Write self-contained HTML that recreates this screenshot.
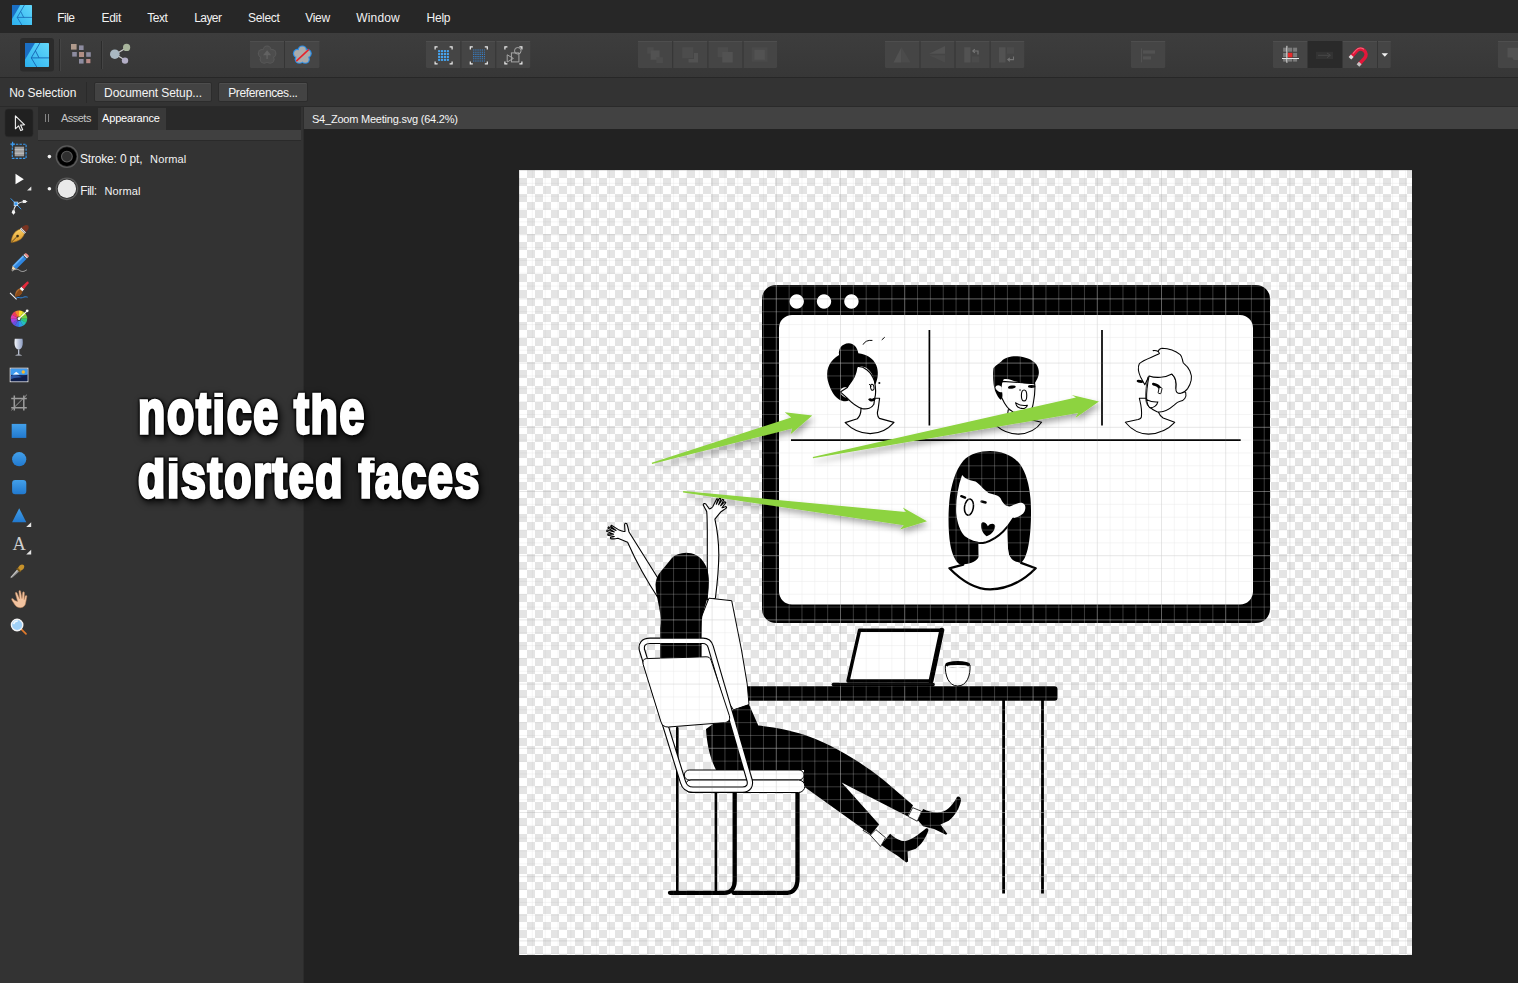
<!DOCTYPE html>
<html lang="en">
<head>
<meta charset="utf-8">
<title>S4_Zoom Meeting.svg</title>
<style>
*{box-sizing:border-box;margin:0;padding:0}
html,body{width:1518px;height:983px;overflow:hidden;background:#333333}
body{position:relative;font-family:"Liberation Sans",sans-serif;color:#f0f0f0;font-size:12px}
.abs{position:absolute}
.t{position:absolute;white-space:nowrap;line-height:1}
/* chrome bars */
#menubar{left:0;top:0;width:1518px;height:33px;background:#272727}
#toolbar{left:0;top:33px;width:1518px;height:45px;background:linear-gradient(#3d3d3d,#373737);border-bottom:1px solid #272727}
#ctxbar{left:0;top:78px;width:1518px;height:29px;background:#333333}
#ptabs{left:38px;top:106.5px;width:263px;height:23.5px;background:#292929}
#pstrip{left:38px;top:130px;width:263px;height:11px;background:#404040;border-bottom:1px solid #2a2a2a}
#doctab{left:304px;top:107px;width:1214px;height:22px;background:#424242}
#work{left:304px;top:129px;width:1214px;height:854px;background:#222222}
#gutter{left:303px;top:107px;width:1px;height:876px;background:#2c2c2c}
.menu{top:11px;font-size:13px;color:#f2f2f2}
.tbtn{position:absolute;top:41px;height:27px;background:#454545;border-top:1px solid #505050}
.sep{position:absolute;width:1px;background:#2a2a2a}
.cbtn{position:absolute;top:81.7px;height:20.6px;background:#434343;border:1px solid #2c2c2c;border-radius:2px;box-shadow:inset 0 1px 0 #4d4d4d}
/* canvas */
#canvas{left:519px;top:170px;width:893px;height:785px;background-color:#ffffff;
 background-image:conic-gradient(#e4e4e4 25%,#ffffff 0 50%,#e4e4e4 0 75%,#ffffff 0);
 background-size:16px 16px;background-position:0 0}
#art{left:519px;top:170px;width:893px;height:785px}
/* caption */
.capw{position:absolute;left:137.8px;filter:drop-shadow(0 0 .8px #000) drop-shadow(0 0 .8px #000) drop-shadow(2px 3px 3px rgba(0,0,0,.75))}
.cap{font-weight:bold;font-size:61px;color:#fff;white-space:nowrap;line-height:1;transform-origin:0 0;-webkit-text-stroke:3.4px #fff;letter-spacing:2.4px;clip-path:inset(11.1px -30px -30px -30px)}
</style>
</head>
<body>
<!-- ======= bars ======= -->
<div class="abs" id="menubar"></div>
<div class="abs" id="toolbar"></div>
<div class="abs" id="ctxbar"></div>
<div class="abs" id="ptabs"></div>
<div class="abs" id="pstrip"></div>
<div class="abs" id="doctab"></div>
<div class="abs" id="work"></div>
<div class="abs" id="gutter"></div>
<div class="abs" style="left:0;top:106px;width:1518px;height:1px;background:#2a2a2a"></div>


<!-- TOOLBAR-BEGIN -->
<svg class="abs" style="left:0;top:0;width:1518px;height:108px" viewBox="0 0 1518 108">
<defs>
 <linearGradient id="lgA" x1="1" y1="0" x2="0" y2="1"><stop offset="0" stop-color="#63d8fb"/><stop offset="1" stop-color="#2bb0ee"/></linearGradient>
 <g id="afflogo">
  <rect x="0" y="0" width="20" height="20" rx=".6" fill="url(#lgA)"/>
  <path d="M0 0H8.300L0 14Z" fill="#1b6fc4"/>
  <path d="M12.400 0L5.200 12.400L9.800 20M5.200 12.400H20M8.700 6.500L11.700 12.400" stroke="#1462b2" stroke-width=".75" fill="none"/>
 </g>
 <g id="flower"><path d="M0 -9.200C2.600 -9.200 4.600 -7.200 4.600 -4.800C7.200 -5.600 9.600 -3.800 9.600 -1.200C9.600 1 8 2.600 6.200 3C7.400 5.400 6 8.400 3 8.600C1.800 8.600 .6 8 0 7C-.6 8 -1.800 8.600 -3 8.600C-6 8.400 -7.400 5.400 -6.200 3C-8 2.600 -9.600 1 -9.600 -1.200C-9.600 -3.800 -7.200 -5.600 -4.600 -4.800C-4.600 -7.200 -2.600 -9.200 0 -9.200Z"/></g>
 <g id="brk" fill="none" stroke="#ededed" stroke-width="1.200"><path d="M-8.500 -6V-8.500H-6M6 -8.500H8.500V-6M8.500 6V8.500H6M-6 8.500H-8.500V6"/></g>
</defs>
<!-- app logo in menu bar -->
<use href="#afflogo" transform="translate(12 5)"/>
<!-- persona buttons -->
<rect x="20" y="38" width="34" height="33.500" rx="3" fill="#2b2b2b"/>
<use href="#afflogo" transform="translate(25 43) scale(1.2)"/>
<rect x="59" y="39" width="1" height="32" fill="#2b2b2b"/><rect x="60" y="39" width="1" height="32" fill="#444"/>
<g>
 <rect x="71" y="44" width="5.600" height="5.600" fill="#b09a8c"/><rect x="79" y="45.400" width="4.600" height="4.600" fill="#8d8ca0"/>
 <rect x="72.200" y="52" width="4.600" height="4.600" fill="#8d8ca0"/><rect x="79" y="52" width="5" height="5" fill="#b08e84"/><rect x="86.200" y="52.200" width="4.600" height="4.600" fill="#8d8ca0"/>
 <rect x="79" y="59" width="4.600" height="4.600" fill="#8d8ca0"/><rect x="86.200" y="59" width="4.200" height="4.200" fill="#b88a86"/>
</g>
<rect x="101" y="41" width="1" height="28" fill="#2b2b2b"/><rect x="102" y="41" width="1" height="28" fill="#444"/>
<g>
 <path d="M115.500 54.200L126 48M115.500 54.200L124.800 60" stroke="#c9c9c9" stroke-width="1.300"/>
 <circle cx="114.800" cy="54.200" r="4.800" fill="#a9b8c2"/><circle cx="126.600" cy="47.400" r="3.600" fill="#a8b59c"/><circle cx="125" cy="60.600" r="3.200" fill="#b3aec6"/>
</g>

<!-- button group backgrounds -->
<g fill="#454545">
 <rect x="250" y="41" width="69.400" height="27" rx="1.500"/>
 <rect x="426" y="41" width="104.200" height="27" rx="1.500"/>
 <rect x="638" y="41" width="139" height="27" rx="1.500"/>
 <rect x="885" y="41" width="139.200" height="27" rx="1.500"/>
 <rect x="1131" y="41" width="34.200" height="27" rx="1.500"/>
 <rect x="1273" y="41" width="117.800" height="27" rx="1.500"/>
 <rect x="1498" y="41" width="24" height="27" rx="1.500"/>
</g>
<g fill="#4e4e4e">
 <rect x="250" y="41" width="69.400" height="1"/><rect x="426" y="41" width="104.200" height="1"/><rect x="638" y="41" width="139" height="1"/>
 <rect x="885" y="41" width="139.200" height="1"/><rect x="1131" y="41" width="34.200" height="1"/><rect x="1273" y="41" width="117.800" height="1"/><rect x="1498" y="41" width="24" height="1"/>
</g>
<rect x="1307.500" y="41" width="35" height="27" fill="#2a2a2a"/>
<!-- separators -->
<g fill="#353535">
 <rect x="284" y="41" width="1" height="27"/>
 <rect x="460.400" y="41" width="1" height="27"/><rect x="495.300" y="41" width="1" height="27"/>
 <rect x="672.200" y="41" width="1" height="27"/><rect x="707.400" y="41" width="1" height="27"/><rect x="742.500" y="41" width="1" height="27"/>
 <rect x="919.500" y="41" width="1" height="27"/><rect x="954.500" y="41" width="1" height="27"/><rect x="989.600" y="41" width="1" height="27"/>
 <rect x="1377" y="41" width="1" height="27"/>
</g>
<!-- group 1 : flowers -->
<g transform="translate(267.100 54.800)"><g fill="#585858"><circle cx="0.00" cy="-4.70" r="4.50"/><circle cx="4.76" cy="-1.25" r="4.50"/><circle cx="2.94" cy="4.35" r="4.50"/><circle cx="-2.94" cy="4.35" r="4.50"/><circle cx="-4.76" cy="-1.25" r="4.50"/><circle cx="0" cy=".3" r="5.70"/></g><g fill="#4d4d4d"><circle cx="0.00" cy="-4.70" r="3.50"/><circle cx="4.76" cy="-1.25" r="3.50"/><circle cx="2.94" cy="4.35" r="3.50"/><circle cx="-2.94" cy="4.35" r="3.50"/><circle cx="-4.76" cy="-1.25" r="3.50"/><circle cx="0" cy=".3" r="4.70"/></g><path d="M0 4.200V-1.800M-2.700 -.2L0 -3.600L2.700 -.2Z" stroke="#626262" stroke-width="1.300" fill="#626262"/></g>
<g transform="translate(302.300 54.800)"><g fill="#2a8de6"><circle cx="0.00" cy="-4.70" r="4.70"/><circle cx="4.76" cy="-1.25" r="4.70"/><circle cx="2.94" cy="4.35" r="4.70"/><circle cx="-2.94" cy="4.35" r="4.70"/><circle cx="-4.76" cy="-1.25" r="4.70"/><circle cx="0" cy=".3" r="5.90"/></g><g fill="#ababab"><circle cx="0.00" cy="-4.70" r="3.50"/><circle cx="4.76" cy="-1.25" r="3.50"/><circle cx="2.94" cy="4.35" r="3.50"/><circle cx="-2.94" cy="4.35" r="3.50"/><circle cx="-4.76" cy="-1.25" r="3.50"/><circle cx="0" cy=".3" r="4.70"/></g><path d="M-6 6.300L6.600 -5.400" stroke="#e8212a" stroke-width="1.500"/></g>
<!-- group 2 : snapping grids -->
<g transform="translate(443.600 55.400)"><use href="#brk"/>
 <g fill="#46a3ee"><rect x="-5.500" y="-5.300" width="2.100" height="2.100"/><rect x="-2.600" y="-5.300" width="2.100" height="2.100"/><rect x=".3" y="-5.300" width="2.100" height="2.100"/><rect x="3.200" y="-5.300" width="2.100" height="2.100"/>
 <rect x="-5.500" y="-2.400" width="2.100" height="2.100"/><rect x="-2.600" y="-2.400" width="2.100" height="2.100"/><rect x=".3" y="-2.400" width="2.100" height="2.100"/><rect x="3.200" y="-2.400" width="2.100" height="2.100"/>
 <rect x="-5.500" y=".5" width="2.100" height="2.100"/><rect x="-2.600" y=".5" width="2.100" height="2.100"/><rect x=".3" y=".5" width="2.100" height="2.100"/><rect x="3.200" y=".5" width="2.100" height="2.100"/>
 <rect x="-5.500" y="3.400" width="2.100" height="2.100"/><rect x="-2.600" y="3.400" width="2.100" height="2.100"/><rect x=".3" y="3.400" width="2.100" height="2.100"/><rect x="3.200" y="3.400" width="2.100" height="2.100"/></g></g>
<g transform="translate(478.800 55.400)"><use href="#brk"/>
 <path d="M-5.600 -5.400H6M-5.600 -3.200H6M-5.600 -1H6M-5.600 1.200H6M-5.600 3.400H6M-5.600 5.600H6" stroke="#3588dc" stroke-width="1.100" stroke-dasharray="1.100 1.050"/></g>
<g transform="translate(513.400 55.400)"><use href="#brk"/>
 <g fill="none" stroke="#a5a5a5" stroke-width="1"><rect x="-2" y="-2.500" width="7.500" height="9"/><circle cx="4.400" cy="-4.600" r="3.300"/><path d="M-6.200 -.600L0 3L-6.200 6.600Z"/></g></g>
<!-- group 3 : arrange (disabled) -->
<g fill="#525252">
 <rect x="647.200" y="47.200" width="6.500" height="6.500" fill="#4c4c4c"/><rect x="650.600" y="50.400" width="9" height="9.400"/><rect x="656.400" y="57.200" width="6.500" height="5.800" fill="#4c4c4c"/>
 <rect x="682.200" y="47.200" width="11" height="11" fill="#4c4c4c"/><path d="M694 53H698V62.500H688.500V59H694Z"/>
 <rect x="717.700" y="47.200" width="10.300" height="10" fill="#4c4c4c"/><rect x="722.200" y="52" width="10.600" height="10.500"/>
 <rect x="751.800" y="47.200" width="15.800" height="14.500" fill="#4a4a4a"/><rect x="754.400" y="49.800" width="10.500" height="10"/>
</g>
<!-- group 4 : transforms (disabled) -->
<g fill="#525252">
 <path d="M893.500 62.500L901.400 47.200V62.500Z"/><path d="M901.400 47.200L910.600 62.500H901.400Z" fill="#4b4b4b"/>
 <path d="M929 53.800L945 45.900V53.800Z"/><path d="M929 55.200H945V62.500Z" fill="#4b4b4b"/>
 <rect x="964.200" y="47.200" width="6.300" height="15.300"/><rect x="972" y="56.400" width="7.200" height="6.100" fill="#4b4b4b"/>
 <rect x="999" y="47.200" width="6.500" height="15.300"/><rect x="1006.900" y="47.200" width="7.100" height="6.600" fill="#4b4b4b"/>
</g>
<g fill="none" stroke="#757575" stroke-width="1.100"><path d="M978 54.500V51H973M974.800 49.200L972.800 51L974.800 52.800"/><path d="M1013.500 56.500V59.600H1008M1009.800 57.800L1007.800 59.600L1009.800 61.400"/></g>
<!-- align button -->
<g fill="#525252"><rect x="1141" y="48.400" width="1" height="14"/><rect x="1143" y="50.300" width="12" height="3.400"/><rect x="1143" y="56.300" width="8" height="3.200"/></g>
<!-- snapping group -->
<g fill="#7b7b7b">
 <rect x="1283.100" y="47.700" width="4" height="4"/><rect x="1288" y="47.700" width="4.200" height="4"/><rect x="1293.100" y="47.700" width="4" height="4"/>
 <rect x="1283.100" y="52.900" width="4" height="4.200"/><rect x="1293.100" y="52.900" width="4" height="4.200"/>
 <rect x="1283.100" y="58" width="4" height="3.600"/><rect x="1288" y="58" width="4.200" height="3.600"/><rect x="1293.100" y="58" width="4" height="3.600"/>
</g>
<rect x="1287.800" y="52.800" width="4.600" height="4.500" fill="#ea2b2b"/>
<rect x="1286.400" y="45.800" width="1" height="17" fill="#e6e6e6"/><rect x="1282" y="58" width="17" height="1" fill="#e6e6e6"/>
<rect x="1316" y="51.800" width="17" height="7.200" fill="#333"/><path d="M1318 55.300H1330M1327 53L1330.500 55.300L1327 57.600" stroke="#484848" stroke-width="1" fill="none"/>
<g transform="translate(1359.600 55.600) rotate(42)">
 <path d="M-7.200 7.500V-1.500A7.200 7.200 0 0 1 7.200 -1.500V7.500H3.600V-1.500A3.600 3.600 0 0 0 -3.600 -1.500V7.500Z" fill="#e3163a"/>
 <path d="M-6.300 3V-1.500A6.300 6.300 0 0 1 -1 -7.600" stroke="#ff7f90" stroke-width="1" fill="none" opacity=".75"/>
 <rect x="-7.200" y="5" width="3.600" height="3.400" fill="#dcdcdc"/><rect x="3.600" y="5" width="3.600" height="3.400" fill="#c4c4c4"/>
</g>
<path d="M1381.600 53.200H1388L1384.800 56.800Z" fill="#f2f2f2"/>
<!-- last clipped button -->
<path d="M1507.500 47.800H1518V60H1514.500C1513.200 60 1512.600 59 1512.600 57.500H1507.500Z" fill="#525252"/>
</svg>
<!-- TOOLBAR-END -->

<!-- ======= context bar ======= -->
<div class="sep" style="left:86px;top:82px;height:21px"></div>
<div class="cbtn" style="left:93.7px;width:118.5px"></div>
<div class="cbtn" style="left:217.6px;width:90.6px"></div>

<!-- ======= panel ======= -->
<div class="abs" style="left:97.6px;top:108px;width:68px;height:22px;background:#393939"></div>
<!-- SWATCH-BEGIN -->
<svg class="abs" style="left:40px;top:142px;width:44px;height:64px" viewBox="40 142 44 64">
 <circle cx="49.400" cy="156.600" r="1.800" fill="#f4f4f4"/><circle cx="49.400" cy="188.800" r="1.800" fill="#f4f4f4"/>
 <circle cx="66.900" cy="156.600" r="10.700" fill="#2c2c2c" stroke="#5a5a5a" stroke-width="1.300"/><circle cx="66.900" cy="156.600" r="9.400" fill="#000"/>
 <circle cx="66.900" cy="156.600" r="5.400" fill="#2f2f2f" stroke="#5c5c5c" stroke-width="1.100"/>
 <circle cx="66.900" cy="188.800" r="10.700" fill="#2c2c2c" stroke="#5a5a5a" stroke-width="1.300"/><circle cx="66.900" cy="188.800" r="9.200" fill="#e9e9e9"/>
</svg>
<!-- SWATCH-END -->

<!-- TEXT-BEGIN -->
<div class="t" style="left:57.2px;top:11.5px;font-size:12px;color:#f2f2f2;letter-spacing:-0.51px">File</div>
<div class="t" style="left:101.4px;top:11.5px;font-size:12px;color:#f2f2f2;letter-spacing:-0.26px">Edit</div>
<div class="t" style="left:147.3px;top:11.5px;font-size:12px;color:#f2f2f2;letter-spacing:-0.47px">Text</div>
<div class="t" style="left:194.2px;top:11.5px;font-size:12px;color:#f2f2f2;letter-spacing:-0.56px">Layer</div>
<div class="t" style="left:248.0px;top:11.5px;font-size:12px;color:#f2f2f2;letter-spacing:-0.29px">Select</div>
<div class="t" style="left:305.2px;top:11.5px;font-size:12px;color:#f2f2f2;letter-spacing:-0.27px">View</div>
<div class="t" style="left:356.3px;top:11.5px;font-size:12px;color:#f2f2f2;letter-spacing:0.16px">Window</div>
<div class="t" style="left:426.5px;top:11.5px;font-size:12px;color:#f2f2f2;letter-spacing:-0.23px">Help</div>
<div class="t" style="left:9.2px;top:86.6px;font-size:12px;color:#f4f4f4;letter-spacing:-0.08px">No Selection</div>
<div class="t" style="left:104.1px;top:86.6px;font-size:12px;color:#f4f4f4;letter-spacing:-0.09px">Document Setup...</div>
<div class="t" style="left:228.2px;top:86.6px;font-size:12px;color:#f4f4f4;letter-spacing:-0.38px">Preferences...</div>
<div class="t" style="left:61.0px;top:113.0px;font-size:11px;color:#c4c4c4;letter-spacing:-0.52px">Assets</div>
<div class="t" style="left:102.0px;top:113.0px;font-size:11px;color:#ffffff;letter-spacing:-0.15px">Appearance</div>
<div class="t" style="left:80.0px;top:153.0px;font-size:12px;color:#f2f2f2;letter-spacing:-0.18px">Stroke: 0 pt,</div>
<div class="t" style="left:150.1px;top:153.9px;font-size:11px;color:#f2f2f2;letter-spacing:0.11px">Normal</div>
<div class="t" style="left:80.3px;top:184.9px;font-size:12px;color:#f2f2f2;letter-spacing:-0.49px">Fill:</div>
<div class="t" style="left:104.4px;top:185.8px;font-size:11px;color:#f2f2f2;letter-spacing:0.11px">Normal</div>
<div class="t" style="left:312.0px;top:113.8px;font-size:11px;color:#f6f6f6;letter-spacing:-0.22px">S4_Zoom Meeting.svg (64.2%)</div>
<div class="abs" style="left:45px;top:114.2px;width:1px;height:7.6px;background:#858585"></div><div class="abs" style="left:48px;top:114.2px;width:1px;height:7.6px;background:#858585"></div>
<!-- TEXT-END -->

<!-- TOOLS-BEGIN -->
<svg class="abs" style="left:0;top:107px;width:38px;height:540px" viewBox="0 107 38 540">
<defs>
 <linearGradient id="tb" x1="0" y1="0" x2="0" y2="1"><stop offset="0" stop-color="#43a0ea"/><stop offset="1" stop-color="#2179cf"/></linearGradient>
 <linearGradient id="gl" x1="0" y1="0" x2="1" y2="0"><stop offset="0" stop-color="#f4f6fb"/><stop offset="1" stop-color="#8b9bc0"/></linearGradient>
 <linearGradient id="nib" x1="0" y1="0" x2="1" y2="1"><stop offset="0" stop-color="#ffd66b"/><stop offset="1" stop-color="#d28a1f"/></linearGradient>
</defs>
<!-- selected tool bg -->
<rect x="5" y="109" width="28" height="27.800" rx="3" fill="#202020" stroke="#2c2c2c" stroke-width=".6"/>
<!-- move tool -->
<path d="M15.400 115.800V128.800L18.600 125.900L20.700 130.600L22.700 129.700L20.600 125.100L24.600 124.800Z" fill="#2a2a2a" stroke="#f2f2f2" stroke-width="1.100" stroke-linejoin="round"/>
<!-- artboard tool -->
<rect x="12.300" y="144.200" width="13.800" height="14.200" fill="none" stroke="#3a9af0" stroke-width="1.100" stroke-dasharray="2.400 1.200"/>
<path d="M10.400 144.200H14.800M12.600 141.800V146.400" stroke="#3a9af0" stroke-width="1.200"/>
<rect x="14.700" y="146.700" width="9.400" height="9.600" fill="#9b9b9b"/><path d="M14.700 149.700H24.100M14.700 153.200H24.100" stroke="#c9c9c9" stroke-width=".9"/>
<!-- node tool -->
<path d="M15.500 173.800V184.300L23.800 179.300Z" fill="#fbfbfb"/>
<path d="M31.300 186.400V190.600H27Z" fill="#e4e4e4"/>
<!-- corner tool -->
<path d="M10.700 198.400L21.200 209.200" stroke="#3a9af0" stroke-width="1"/>
<path d="M13.500 213.500C13.500 206 17.500 201.800 26 201.500" fill="none" stroke="#e8e8e8" stroke-width="1.100"/>
<path d="M22.800 199.800L27.800 201.500L22.800 203.200ZM11.900 210.400L13.500 215.200L15.100 210.400Z" fill="#f4f4f4"/>
<circle cx="13.500" cy="212.300" r="1.600" fill="#f4f4f4"/><circle cx="24.900" cy="201.500" r="1.500" fill="#f4f4f4"/>
<rect x="14.100" y="202" width="3.700" height="3.700" fill="#3a9af0" stroke="#d6ecff" stroke-width=".6"/>
<!-- pen tool -->
<g transform="translate(19 234.600) rotate(45)">
 <path d="M0 11.200C-5.400 5 -5.200 -1.500 -3 -4.500H3C5.200 -1.500 5.400 5 0 11.200Z" fill="url(#nib)" stroke="#a8701a" stroke-width=".5"/>
 <path d="M0 10.500V3" stroke="#4a3a1a" stroke-width=".8"/><circle cx="0" cy="2" r="1.300" fill="#3a2d14"/>
 <rect x="-3.300" y="-6.700" width="6.600" height="2.300" fill="#e9e9e9"/><path d="M-3.300 -5.500H3.300" stroke="#555" stroke-width=".6"/>
 <path d="M-3 -6.700C-3.400 -10.500 -2 -12.500 0 -13C2 -12.500 3.400 -10.500 3 -6.700Z" fill="#7a3422"/>
</g>
<!-- pencil tool -->
<g transform="translate(19 263) rotate(45)">
 <rect x="-2.500" y="-8" width="5" height="14.500" fill="#2f86e0"/><rect x="-2.500" y="-8" width="1.700" height="14.500" fill="#66b1f5"/>
 <rect x="-2.500" y="-10.200" width="5" height="1.500" fill="#e6e6e6"/><path d="M-2.500 -10.200V-11.200C-2.500 -12.600 2.500 -12.600 2.500 -11.200V-10.200Z" fill="#f08a84"/>
 <path d="M-2.500 6.500H2.500L0 10.800Z" fill="#f0d9b0"/><path d="M-.9 9.200H.9L0 10.800Z" fill="#333"/>
</g>
<path d="M12 271.200C15 268.600 17.600 268.800 19.600 270.400C22 272.200 24.200 271.600 26.800 269.800" fill="none" stroke="#a9a9a9" stroke-width="1"/>
<!-- brush tool -->
<path d="M10 292.800L16.600 299.400" stroke="#f1f1f1" stroke-width="1.100"/>
<path d="M16.200 298.200C18.400 296.200 20.200 298.800 22.600 297.600C24.400 296.600 25.800 296.600 27.600 297.200" fill="none" stroke="#2f86e0" stroke-width="1"/>
<g transform="translate(20.400 290.600) rotate(42)">
 <path d="M0 7.800C-3.600 4.500 -3 1 -1.900 -1H1.900C3 1 3.600 4.500 0 7.800Z" fill="#b06a2c"/><path d="M0 7.800C-1.800 4.500 -1.600 1 -1 -1H1.900C3 1 3.600 4.500 0 7.800Z" fill="#8a4a18"/>
 <rect x="-1.800" y="-3.600" width="3.600" height="2.700" fill="#f2f2f2"/>
 <path d="M-1.700 -3.600L-1.100 -11C-.6 -12 .6 -12 1.100 -11L1.700 -3.600Z" fill="#e42a3c"/>
</g>
<!-- fill (colour wheel) tool -->
<g transform="translate(19 318.700)">
 <path d="M0 0L-0.11 -8.20A8.2 8.2 0 0 1 4.20 -7.04Z" fill="#f6e12a"/><path d="M0 0L4.00 -7.16A8.2 8.2 0 0 1 7.16 -4.00Z" fill="#c3dc2e"/><path d="M0 0L7.04 -4.20A8.2 8.2 0 0 1 8.20 0.11Z" fill="#6fd044"/><path d="M0 0L8.20 -0.11A8.2 8.2 0 0 1 7.04 4.20Z" fill="#2fc77a"/><path d="M0 0L7.16 4.00A8.2 8.2 0 0 1 4.00 7.16Z" fill="#25bfc0"/><path d="M0 0L4.20 7.04A8.2 8.2 0 0 1 -0.11 8.20Z" fill="#2f9be8"/><path d="M0 0L0.11 8.20A8.2 8.2 0 0 1 -4.20 7.04Z" fill="#3f6fe6"/><path d="M0 0L-4.00 7.16A8.2 8.2 0 0 1 -7.16 4.00Z" fill="#6a4fe0"/><path d="M0 0L-7.04 4.20A8.2 8.2 0 0 1 -8.20 -0.11Z" fill="#a545dd"/><path d="M0 0L-8.20 0.11A8.2 8.2 0 0 1 -7.04 -4.20Z" fill="#dd3fb0"/><path d="M0 0L-7.16 -4.00A8.2 8.2 0 0 1 -4.00 -7.16Z" fill="#ee3b5c"/><path d="M0 0L-4.20 -7.04A8.2 8.2 0 0 1 0.11 -8.20Z" fill="#f5872c"/>
 <circle r="2.300" fill="#3a3a3a"/>
 <path d="M0 0L8.200 -7.900" stroke="#fafafa" stroke-width="1.100"/><circle r="1.400" fill="#fafafa"/><circle cx="8.200" cy="-7.900" r="1.400" fill="#fafafa"/>
</g>
<!-- transparency (glass) tool -->
<path d="M14.800 338.800H22.500C23.400 344 22.400 349.400 18.700 349.600C14.800 349.400 13.900 344 14.800 338.800Z" fill="url(#gl)"/>
<rect x="18.100" y="349.400" width="1.200" height="5.200" fill="#c4cde2"/><path d="M15.200 355.400C16.600 354.200 20.700 354.200 22.100 355.400Z" fill="#d3d9ea"/>
<!-- place image tool -->
<rect x="10.200" y="368.200" width="17.700" height="13.500" fill="#182a5e" stroke="#e4e4e4" stroke-width="1"/>
<rect x="10.700" y="368.700" width="16.700" height="6.200" fill="#3f9cf0"/>
<path d="M10.700 379.500C15 376 20 379 27.400 374.500V381.200H10.700Z" fill="#0f1f4c"/><path d="M10.700 376.200C14 373.500 18.500 375.500 21.800 377.300C17.800 378 14.600 377.500 10.700 379.200Z" fill="#2b57a6"/>
<path d="M13 374.600L16.200 371.700L19.600 374.600Z" fill="#f4f8ff"/><circle cx="23.300" cy="372" r="1.700" fill="#f5b92e"/>
<!-- vector crop tool -->
<path d="M14.300 395.400V410.600M23.800 395.400V410.600M11.200 398.500H26.800M11.200 407.700H26.800" stroke="#9c9c9c" stroke-width="1.500"/><path d="M11.400 410.200L26.800 394.800" stroke="#9c9c9c" stroke-width="1"/>
<!-- shapes -->
<rect x="11.700" y="423.900" width="14.600" height="14" fill="url(#tb)"/>
<circle cx="19.200" cy="459.200" r="7.100" fill="url(#tb)"/>
<rect x="12.100" y="480" width="14.200" height="14.200" rx="3.200" fill="url(#tb)"/>
<path d="M19.200 508.300L26.300 522.300H12.100Z" fill="url(#tb)"/><path d="M31.200 522.200V527H26.200Z" fill="#e4e4e4"/>
<!-- text tool : drawn as real text -->
<text x="19.200" y="550.200" font-family="'Liberation Serif',serif" font-size="18.500" fill="#cfcfcf" text-anchor="middle">A</text>
<path d="M31.200 549.800V554.600H26.200Z" fill="#e4e4e4"/>
<!-- colour picker -->
<g transform="translate(17.200 571.600) rotate(45)">
 <path d="M-1.400 -1.500H1.400L.8 7.500L0 9.500L-.8 7.500Z" fill="#8f8f8f"/><path d="M-1.400 -1.500H0L0 9.500L-.8 7.500Z" fill="#c4c4c4"/>
 <rect x="-2.600" y="-3" width="5.200" height="1.800" fill="#7a5a1c"/>
 <path d="M-2 -3C-3.200 -6.600 -2 -9 0 -9.200C2 -9 3.200 -6.600 2 -3Z" fill="#c7922b"/>
</g>
<!-- view (hand) tool -->
<g fill="#f2c3a0" stroke="#b57c55" stroke-width=".5" stroke-linejoin="round">
 <path d="M14.800 600.400C13.200 598.800 12.200 598.200 11.700 598.800C11.200 599.800 13.400 602.400 15 605C16.400 607 18.600 607.900 20.800 607.700C23.600 607.400 25.200 605.600 25.600 603.200L26.900 596.400C27 595.200 25.600 595 25.200 596.100L24.200 599.600L24.400 592.800C24.400 591.500 22.800 591.500 22.600 592.800L22 598.600L20.600 591.200C20.300 590 18.800 590.300 18.900 591.600L19.600 598.800L17 592.900C16.400 591.800 15 592.400 15.400 593.600L17.600 601.500Z"/>
</g>
<!-- zoom tool -->
<path d="M21.300 629.200L26 633.800" stroke="#e07a2c" stroke-width="1.700" stroke-linecap="round"/>
<circle cx="17.100" cy="625" r="5.700" fill="#9fd0f7" stroke="#f4f4f4" stroke-width="1.400"/><path d="M13.600 624.200C14 622 15.800 620.900 17.800 621" stroke="#eef8ff" stroke-width="1.500" fill="none"/>
</svg>
<!-- TOOLS-END -->

<!-- ======= canvas ======= -->
<div class="abs" id="canvas"></div>
<svg class="abs" id="art" viewBox="519 170 893 785">
<defs>
 <pattern id="gmin" x="519" y="170" width="12.84" height="12.84" patternUnits="userSpaceOnUse">
  <path d="M0 0H12.84M0 0V12.84" stroke="#808080" stroke-opacity=".16" stroke-width="1" fill="none"/>
 </pattern>
 <pattern id="gmaj" x="519" y="170" width="64.2" height="64.2" patternUnits="userSpaceOnUse">
  <path d="M0 0H64.2M0 0V64.2" stroke="#707070" stroke-opacity=".22" stroke-width="1" fill="none"/>
 </pattern>
 <pattern id="lmin" x="519" y="170" width="12.84" height="12.84" patternUnits="userSpaceOnUse">
  <path d="M0 0H12.84M0 0V12.84" stroke="#ffffff" stroke-opacity=".42" stroke-width=".9" fill="none"/>
 </pattern>
 <pattern id="lmaj" x="519" y="170" width="64.2" height="64.2" patternUnits="userSpaceOnUse">
  <path d="M0 0H64.2M0 0V64.2" stroke="#ffffff" stroke-opacity=".3" stroke-width="1" fill="none"/>
 </pattern>
 <!-- monitor frame shape -->
 <path id="mon" fill-rule="evenodd" d="M776 285H1256a14 14 0 0 1 14 14V609a14 14 0 0 1 -14 14H776a14 14 0 0 1 -14 -14V299a14 14 0 0 1 14 -14Z
  M792 315a13 13 0 0 0 -13 13V591.5a13 13 0 0 0 13 13H1240a13 13 0 0 0 13 -13V328a13 13 0 0 0 -13 -13Z
  M796.7 294.3a7.2 7.2 0 1 0 .01 0Z M824 294.3a7.2 7.2 0 1 0 .01 0Z M851.4 294.3a7.2 7.2 0 1 0 .01 0Z"/>
</defs>
<!-- ART-BEGIN -->
<!-- monitor -->
<rect x="779" y="315" width="474" height="290" rx="13" fill="#fff"/>
<circle cx="796.7" cy="301.5" r="7.2" fill="#fff"/><circle cx="824" cy="301.5" r="7.2" fill="#fff"/><circle cx="851.4" cy="301.5" r="7.2" fill="#fff"/>
<use href="#mon" fill="#000"/>
<path d="M929.4 330V425.5M1102 330V425.5M791 440.2H1240.7" stroke="#000" stroke-width="1.7" fill="none"/>

<!-- face 1 : woman with bun -->
<g transform="translate(800 325) scale(.12207)" stroke="#000" stroke-width="9.500" fill="none" stroke-linecap="round" stroke-linejoin="round">
 <path fill="#fff" d="M500 683C500 720 495 745 470 768L370 800C420 850 490 890 575 890C660 890 725 850 770 798L650 765C632 745 628 725 640 690L652 600L600 600Z"/>
 <path fill="#fff" d="M470 340C520 335 585 380 610 460C622 520 622 570 612 600L605 650C590 680 550 692 510 685C460 670 420 635 385 597L330 548L388 512Z"/>
 </g>
<g fill="#000" stroke="none"><path id="hair1" d="M839.06 354.91C838.09 349.41 841.5 343.55 848.83 343.31C853.71 343.31 857.37 347.58 858.35 353.32C865.92 354.05 873.24 357.96 876.29 365.28C878.74 371.39 878.12 378.71 875.44 384.2L874.71 383.59C874.22 377.49 871.41 371.39 866.53 367.97C863.48 366.26 859.81 365.89 857.37 366.5C857.13 373.83 853.71 380.54 847.36 387.5C843.95 386.65 839.67 388.48 840.28 391.89C840.89 395.19 843.95 397.02 847 397.88L848.83 400.44C846.39 401.9 842.11 401.29 839.06 399.46C832.96 395.8 828.69 386.03 827.1 377.49C826.25 367.72 830.52 359.79 839.06 354.91Z"/></g>
<g transform="translate(800 325) scale(.12207)" stroke="#000" stroke-width="9.500" fill="none" stroke-linecap="round" stroke-linejoin="round">
 <ellipse cx="592" cy="510" rx="14" ry="25" transform="rotate(-10 592 510)" stroke-width="8"/>
 <path d="M568 487L584 500" stroke-width="8"/>
 <circle cx="650" cy="475" r="8.500" fill="#000" stroke="none"/>
 <path fill="#000" stroke="none" d="M558 608C568 596 584 597 590 606C598 595 613 597 620 606C610 630 574 636 558 608Z"/>
 <path d="M518 158C530 135 555 122 590 126M672 120L692 102" stroke-width="8"/>
</g>

<!-- face 2 : man dark hair -->
<g transform="translate(960 335) scale(.12207)" stroke="#000" stroke-width="9" fill="none" stroke-linecap="round" stroke-linejoin="round">
 <path fill="#fff" d="M395 612L390 652L300 745C350 790 420 812 480 812C560 808 630 770 668 715L580 695L585 612Z"/>
 <path fill="#fff" d="M345 380L612 398C616 440 612 500 600 560C595 590 588 605 580 612C540 640 480 645 435 630C395 610 365 565 345 520L320 470Z"/>
 </g>
<g fill="#000" stroke="none"><path id="hair2" d="M993.57 367.96C996.62 364.3 999.06 363.69 1001.5 361.25C1004.56 357.58 1011.27 356 1017.37 356.36C1024.7 356.73 1032.02 359.41 1036.29 364.3C1039.35 368.57 1039.59 374.06 1037.51 378.33L1034.71 383.58C1028.36 384.07 1018.59 382.85 1011.27 379.92C1008.83 378.95 1005.78 378.7 1003.7 379.19C1001.5 382.61 1000.89 387.49 1002.11 392.37C1002.97 396.03 1002.11 399.09 1000.53 399.7C996.62 396.03 994.18 389.93 993.57 383.83C992.96 377.72 992.96 371.62 993.57 367.96Z"/></g>
<g transform="translate(960 335) scale(.12207)" stroke="#000" stroke-width="9" fill="none" stroke-linecap="round" stroke-linejoin="round">
 <path fill="#fff" stroke="none" d="M291 428C296 406 328 406 342 430L344 470C316 468 293 452 291 428Z"/>
 <ellipse cx="425" cy="427" rx="32" ry="13" fill="#000" stroke="none" transform="rotate(-8 425 427)"/>
 <ellipse cx="587" cy="422" rx="30" ry="12" fill="#000" stroke="none"/>
 <ellipse cx="525" cy="495" rx="22" ry="45"/>
 <circle cx="492" cy="450" r="6.500" fill="#000" stroke="none"/>
 <path fill="#fff" d="M455 555C485 575 520 582 552 575C548 600 520 608 490 598C470 590 458 575 455 555Z"/>
</g>

<!-- face 3 : outline man -->
<g transform="translate(1085 335) scale(.12207)" stroke="#000" stroke-width="8.500" fill="none" stroke-linecap="round" stroke-linejoin="round">
 <path fill="#fff" d="M445 518L500 518L603 635C608 650 620 665 640 680L735 715C680 775 600 808 520 812C450 812 380 775 330 715L435 693C455 688 462 680 462 670C470 610 455 560 445 518Z"/>
 <path fill="#fff" d="M525 335C512 400 502 470 505 525C510 570 540 610 590 628C640 638 690 610 730 575C750 555 765 545 780 543C810 540 835 510 825 470L745 440C752 390 740 345 712 320Z"/>
 <path fill="#fff" d="M558 128C585 125 605 135 610 152C560 180 480 200 445 235C430 265 440 310 455 345L490 408L525 335C580 355 660 350 712 320C740 345 752 390 745 440C742 465 755 480 785 478C830 470 860 420 870 370C880 310 850 265 805 228C795 200 800 180 780 160C740 128 680 110 630 108C612 112 602 125 600 135"/>
 <path fill="#fff" d="M505 530C535 545 565 550 597 548C590 580 560 598 530 595C515 580 508 555 505 530Z"/>
 <path d="M515 345C502 410 494 470 497 525C500 560 515 590 540 602" stroke-width="6"/>
 <ellipse cx="450" cy="380" rx="27" ry="12" fill="#000" stroke="none" transform="rotate(10 450 380)"/>
 <path d="M560 402C585 406 606 420 616 440" stroke-width="22"/>
 <rect x="603" y="430" width="24" height="50" rx="6" fill="#fff" transform="rotate(12 615 455)" stroke-width="7"/>
</g>

<!-- face 4 : big woman -->
<g fill="#000" stroke="none"><path id="hair4" d="M990.12 451.07C1001.51 451.07 1012.91 455.47 1020.23 464.42C1025.93 472.56 1029.19 483.95 1030.49 498.6C1031.63 513.26 1030.81 531.16 1029.19 540.93C1027.56 552.33 1024.63 560.46 1020.72 562.91C1016.16 562.09 1012.09 560.46 1009.65 556.39C1007.7 550.7 1007.21 540.93 1007.21 531.16L1007.21 518.14L978.72 544.19L978.72 557.21C975.46 562.09 968.95 564.53 960 564.53C955.12 561.28 951.86 553.95 950.23 544.19C948.12 531.16 948.12 513.26 949.42 500.23C951.05 485.58 955.12 470.93 963.26 460.84C969.77 453.84 980.35 451.07 990.12 451.07Z"/></g>
<g transform="translate(925 440) scale(.16279)" stroke="#000" stroke-width="11" fill="none" stroke-linecap="round" stroke-linejoin="round">
 <path fill="#fff" stroke="none" d="M328 620L330 720L290 790L570 790L515 705C507 650 505 600 505 470Z"/>
 <path fill="#fff" d="M235 765L150 788C220 860 310 918 400 918C500 915 600 870 680 788L590 755" stroke-width="14"/>
 <path fill="#fff" stroke="none" d="M228 215C245 238 275 248 310 255C335 270 355 300 390 325C420 335 450 335 465 360C478 390 495 408 520 408C545 400 565 385 595 385C615 390 622 410 612 438C600 462 570 475 542 480C530 500 510 530 480 560C450 590 410 615 370 628C330 632 280 620 245 592C215 560 198 510 192 450C188 380 200 290 228 215Z"/>
 <path d="M542 482C530 502 510 532 480 562C450 592 410 617 370 630C352 634 338 634 326 632" stroke-width="12"/>
 <path d="M223 345L246 354M348 378L372 384" stroke-width="15"/>
 <ellipse cx="270" cy="412" rx="27" ry="50" transform="rotate(8 270 412)" stroke-width="9.500"/>
 <path fill="#000" stroke="none" d="M345 515C350 498 376 503 386 530C400 508 432 510 431 532C426 566 400 586 378 591C354 575 341 545 345 515Z"/>
</g>

<!-- desk -->
<g fill="#000"><g id="desk">
 <path d="M747.500 686.300H1054.500a3 3 0 0 1 3 3V697.700a3 3 0 0 1 -3 3H747.500Z"/>
 <rect x="1002.200" y="700" width="2.800" height="193.500"/>
 <rect x="1041.100" y="700" width="2.800" height="193.500"/>
</g></g>
<!-- laptop -->
<path d="M859.500 630.300H941.800L931 681H848Z" fill="#fff" stroke="#000" stroke-width="3.400" stroke-linejoin="round"/>
<path d="M941.800 630.300L931 681" stroke="#000" stroke-width="5" stroke-linecap="round"/>
<path d="M833.500 684.600H933" stroke="#000" stroke-width="3.600" stroke-linecap="round"/>
<!-- cup -->
<path d="M945.400 665c-.6 10 3 21 12.300 21s13-11 12.300-21z" fill="#fff" stroke="#000" stroke-width="1"/>
<ellipse cx="957.700" cy="664.500" rx="12.400" ry="3.400" fill="#000"/>
<ellipse cx="957.700" cy="666.400" rx="10.400" ry="1.500" fill="#fff"/>

<!-- person: arms -->
<g stroke="#000" stroke-width="1.100" fill="#fff" stroke-linejoin="round" stroke-linecap="round">
 <path d="M707.300 600V530c-.2-7 0-13-.6-18.500-1.200-2.600-2.700-4.800-3.500-6.700.2-1.400 1.600-1.600 2.800-.6l3.200 4.600c1.200.2 2.600-.9 3.600-2.200l4-7.800 1.200.5-1.700 5 3.300-6.200 1.300.6-2.300 6 4-5.500 1.200.8-3.200 5.800 4.200-4.200 1 1-3.800 5.200c1 .2 2.500-.7 3.800-1.400l.8 1.200c-1.500 1.800-4 2.800-5.800 4.300l-5.900 7.300c2.200 10 3.800 22 3.900 35 0 13-1.400 28-3.400 44z"/>
 <path d="M657.500 577.500L629 532c-.8-3.200-1.300-6.200-2.200-8.300-1.200-.9-2.300-.3-2.200 1.200l.4 6.500c-1.500.3-4-.4-5.800-1.300l-7.800-4.800-.8 1 5.400 4.200-7.400-3.600-.7 1.100 6.400 4-7.200-2-.5 1.200 7 3.100-5.800-.4v1.400l6.500 1.200c-1 .6-2.500.7-3.800.7l.2 1.400c2.500.5 5 .2 7.200-.4l9.700 4c4.200 9.500 9 19.500 14.500 29.300 4.500 8 9.500 16.500 15.400 25.500z"/>
</g>
<!-- shirt -->
<path d="M708.900 598.200L731.700 600.700L741.500 650L747.200 684L749 704.600L733.500 709.800L700 660L701 618Z" fill="#fff" stroke="#000" stroke-width="1" stroke-linejoin="round"/>
<!-- pants + shoes -->
<g fill="#000"><g id="pants">
 <path d="M749 704.600L758.300 725.600C776 727.500 790 730.500 804.100 734.800C820 740 840 750 859 762.300C870 769.500 880 777 886.500 782.400L913 805.300L907.500 816.300L841.600 782.400L879.200 824.500L870.900 834.600L803.200 786L804 770H716C710 758 707 745 706 729L733.500 709.800Z"/>
 <path d="M923.1 808.94C930.42 812.06 937.75 813.89 945.07 810.78C950.56 807.66 954.59 801.62 956.97 797.04C958.26 795.58 961.18 797.41 961 800.34C959.72 808.03 955.14 815.72 948.73 820.85L940.49 824.51L947.27 833.66L945.99 834.76L934.09 829.09L923.1 826.34L917.61 819.93Z"/>
 <path d="M890.14 833.66C895.63 838.79 901.13 841.35 905.71 840.99C912.11 839.52 918.52 834.58 925.85 828.54C927.49 827.8 928.96 829.27 928.23 831.1C925.85 837.69 921.27 845.02 915.78 848.68L907.54 851.61L908.09 861.49L906.25 862.59L897.47 855.63L886.48 848.68L880.99 844.65Z"/>
</g></g>
<path d="M912.66 807.66L921.64 811.32L917.24 821.21L908.09 816.45Z" fill="#fff" stroke="#000" stroke-width=".8"/>
<path d="M875.86 829.63L885.56 837.69L880.62 846.48L870.37 835.13Z" fill="#fff" stroke="#000" stroke-width=".8"/><path d="M870.92 835.13L863.04 830.37L864.14 829.09" fill="none" stroke="#000" stroke-width=".8"/>

<!-- hair (back of head) -->
<g fill="#000"><path id="hair" d="M686.100 552.700c3.500 0 6.800.8 9.800 2.400 3 1.500 5.500 3.800 7.300 6.500 2 2.500 3.300 5.300 4.100 8.200 1 3.700 1.600 7.500 1.600 11.300 0 4.500-.2 8.800-.8 13.100-.6 3.300-1.400 6.500-2.400 9.700l-3.300 11.400c-.6 4.300-.8 8.700-.8 13V660H660.100V628.300c.6-3.300.8-6.500.6-9.700-.3-3.800-.8-7.600-1.600-11.400l-2.300-11.400c-.8-3.800-1.200-7.600-1.300-11.400.3-3.500 1.300-6.800 3-9.800 1.900-2.800 4.100-5.500 6.500-8.100l6.500-8.100c2-2 4.100-3.400 6.500-4.100 2.600-.9 5.300-1.500 8.100-1.600z"/></g>

<!-- chair legs -->
<g stroke="#000" fill="none" stroke-linecap="round">
 <path d="M677.300 728V892" stroke-width="2.600"/>
 <path d="M715.900 790V892" stroke-width="2.600"/>
 <path d="M734.700 790V880.500c0 8-4 12.300-10 12.300H670" stroke-width="4.300"/>
 <path d="M797.500 790V879c0 9-4.500 13.800-10 13.800H733.500" stroke-width="4.300"/>
</g>
<!-- seat bars -->
<rect x="684.300" y="770" width="119.700" height="10" rx="5" fill="#fff" stroke="#000" stroke-width="1"/>
<rect x="684.800" y="780" width="120" height="12.500" rx="6.200" fill="#fff" stroke="#000" stroke-width="1"/>
<!-- chair frame tube -->
<g fill="none" stroke-linejoin="round">
 <path d="M650 640.800H703c4 0 6.500 2 7.700 6L749.500 780c1.500 5.500-1 9.600-7 9.600H693c-5.500 0-8.500-2.500-10-7.500L642 650c-1.200-5.500 1.500-9.200 8-9.200z" stroke="#000" stroke-width="6.400"/>
 <path d="M650 640.800H703c4 0 6.500 2 7.700 6L749.500 780c1.500 5.500-1 9.600-7 9.600H693c-5.500 0-8.500-2.500-10-7.500L642 650c-1.200-5.500 1.500-9.200 8-9.200z" stroke="#fff" stroke-width="4.200"/>
</g>
<!-- chair cushion -->
<path d="M646.300 658.600L706 656.800c3 0 4.300 1 5.200 3.800L729.300 715.500c1.200 4.200-.8 6.800-4.800 7.100L668.500 727c-4 .2-6.300-1.500-7.500-5L643.200 664.500c-.8-3.500.2-5.700 3.100-5.900z" fill="#fff" stroke="#000" stroke-width="1"/>
<!-- ART-END -->
<rect x="519" y="170" width="893" height="785" fill="url(#gmin)"/>
<rect x="519" y="170" width="893" height="785" fill="url(#gmaj)"/>
<g fill="url(#lmin)"><use href="#mon"/><use href="#desk"/><use href="#pants"/><use href="#hair"/><use href="#hair4"/><use href="#hair1"/><use href="#hair2"/></g>
<g fill="url(#lmaj)"><use href="#mon"/><use href="#desk"/><use href="#pants"/><use href="#hair"/><use href="#hair4"/><use href="#hair1"/><use href="#hair2"/></g>
<!-- ARROWS-BEGIN -->
<defs>
 <filter id="ash" x="-10%" y="-40%" width="125%" height="200%">
  <feGaussianBlur in="SourceAlpha" stdDeviation="3"/>
  <feOffset dx="2" dy="3.500" result="b"/>
  <feComponentTransfer><feFuncA type="linear" slope=".34"/></feComponentTransfer>
  <feMerge><feMergeNode/><feMergeNode in="SourceGraphic"/></feMerge>
 </filter>
</defs>
<g fill="#8dd33f" filter="url(#ash)">
 <path d="M651.700 462.800L791.200 417.500L784.700 412.200L812.300 415.600L790.600 434.300L792.200 428.400L652.100 464.100Z"/>
 <path d="M812.800 456.900L1076 397.600L1071.700 395.100L1099 401.500L1075.400 418L1078 413L813 458.200Z"/>
 <path d="M683.200 491.100L905.800 512L902.800 507.500L927 521.300L899.900 529.600L903.800 525.300L683 492.400Z"/>
</g>
<!-- ARROWS-END -->
</svg>

<!-- ======= caption ======= -->
<div class="capw" style="top:381.6px"><div class="cap" id="cap1" style="transform:scaleX(.731)">notice the</div></div>
<div class="capw" style="top:446.4px"><div class="cap" id="cap2" style="transform:scaleX(.73)">distorted faces</div></div>
</body>
</html>
